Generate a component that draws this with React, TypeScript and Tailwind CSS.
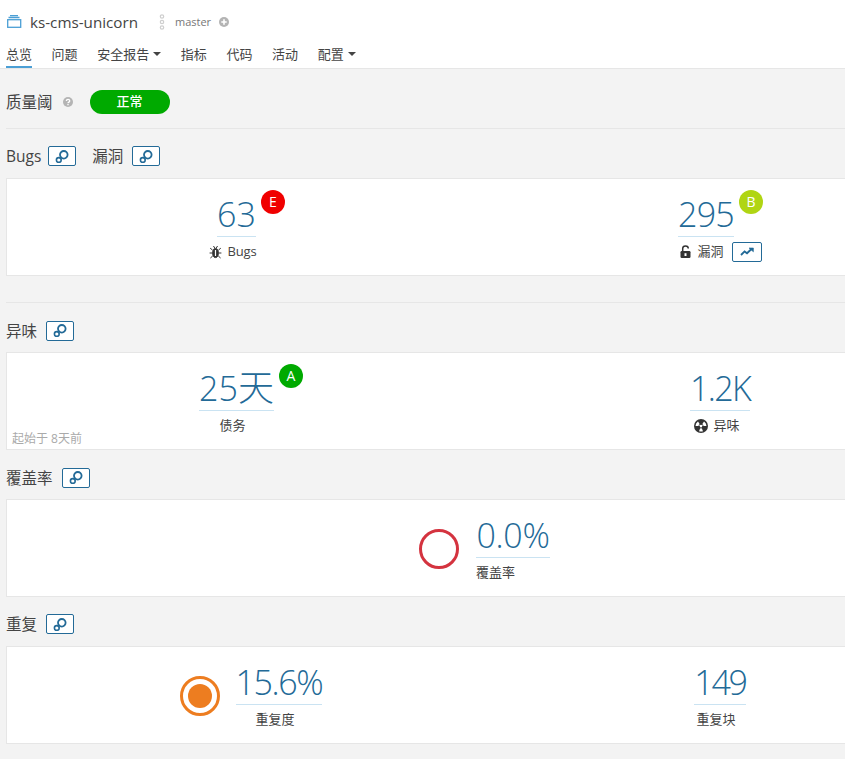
const font = "font-['Open_Sans','Noto_Sans_CJK_SC',sans-serif]";

function RepoIcon() {
  return (
    <svg width="15" height="13" viewBox="0 0 15 13" fill="none" stroke="#4b9fd5" strokeWidth="1.300">
      <rect x="0.700" y="4.700" width="13" height="7.600" />
      <path d="M1.500 2.500h11M3 0.700h8" />
    </svg>
  );
}

function BranchIcon() {
  return (
    <svg width="8" height="16" viewBox="0 0 8 16" fill="none" stroke="#cfcfcf" strokeWidth="1.2">
      <circle cx="4" cy="2.5" r="1.7" />
      <circle cx="4" cy="8" r="1.7" />
      <circle cx="4" cy="13.5" r="1.7" />
    </svg>
  );
}

function CircleGlyph({ glyph }: { glyph: string }) {
  return (
    <svg width="10" height="10" viewBox="0 0 10 10">
      <circle cx="5" cy="5" r="5" fill="#b4b4b4" />
      {glyph === "plus" ? (
        <path d="M5 2.3v5.4M2.3 5h5.4" stroke="#fff" strokeWidth="1.6" />
      ) : (
        <path d="M3.4 3.9c0-2.1 3.3-2.1 3.3 0 0 1.2-1.7 1.2-1.7 2.3M5 7v1.3" stroke="#fff" strokeWidth="1.3" fill="none" />
      )}
    </svg>
  );
}

function LinkButton() {
  return (
    <span className="flex h-[20px] w-[28px] items-center justify-center rounded-[2px] border border-[#236a97] bg-white">
      <svg width="14" height="13" viewBox="0 0 14 13" fill="none" stroke="#236a97">
        <circle cx="8.800" cy="4.800" r="3.800" strokeWidth="1.800" />
        <circle cx="3.800" cy="10" r="2.400" strokeWidth="1.600" />
      </svg>
    </span>
  );
}

function BugIcon() {
  return (
    <svg width="13" height="14" viewBox="0 0 13 14" fill="none" stroke="#333" strokeWidth="1">
      <ellipse cx="6.5" cy="8" rx="2.8" ry="4.6" fill="#333" />
      <path d="M4.5 1l1.2 2M8.5 1L7.3 3M3.5 5L1.2 3.2M9.5 5l2.3-1.8M3.5 8H.6M9.5 8h2.9M3.7 11l-2.3 2M9.3 11l2.3 2" />
      <path d="M6.5 5v6" stroke="#fff" strokeWidth="1.200" />
    </svg>
  );
}

function LockIcon() {
  return (
    <svg width="11" height="13" viewBox="0 0 11 13">
      <path d="M2.700 6V3.600C2.700 2 3.900 1 5.500 1s2.800 1 2.800 2.600" fill="none" stroke="#333" strokeWidth="1.500" />
      <rect x="0.500" y="6" width="10" height="7" rx="1.200" fill="#333" />
      <rect x="4.500" y="8.200" width="2" height="2.800" fill="#fff" />
    </svg>
  );
}

function TrendButton() {
  return (
    <span className="flex h-[20px] w-[30px] items-center justify-center rounded-[2px] border border-[#236a97] bg-white">
      <svg width="14" height="9" viewBox="0 0 14 9" fill="none" stroke="#236a97">
        <path d="M1 8l3.6-3.6 2.4 1.8L11.5 2" strokeWidth="1.9" />
        <path d="M9 1h4.4v3.8z" fill="#236a97" strokeWidth="0.6" />
      </svg>
    </span>
  );
}

function SmellIcon() {
  return (
    <svg width="14" height="14" viewBox="0 0 14 14">
      <circle cx="7" cy="7" r="7" fill="#333" />
      <circle cx="7" cy="7" r="1.300" fill="#fff" />
      <path d="M7 7L5 12.200A5.500 5.500 0 0 0 9 12.200z" fill="#fff" />
      <path d="M7 7L1.900 5A5.500 5.500 0 0 0 2.500 10.100z" fill="#fff" transform="rotate(35 7 7)" />
      <path d="M7 7L12.100 5A5.500 5.500 0 0 1 11.500 10.100z" fill="#fff" transform="rotate(-35 7 7)" />
      <circle cx="7" cy="7" r="2.100" fill="none" stroke="#333" strokeWidth="0.800" />
    </svg>
  );
}

function Badge({ rating, bg }: { rating: string; bg: string }) {
  return (
    <span
      className={`absolute left-full top-[-14px] ml-[5px] flex h-[24px] w-[24px] items-center justify-center rounded-full text-[14px] font-medium text-white ${bg}`}
    >
      {rating}
    </span>
  );
}

function Measure({
  value,
  label,
  badge,
  tracking = "",
}: {
  value: React.ReactNode;
  label: React.ReactNode;
  badge?: React.ReactNode;
  tracking?: string;
}) {
  return (
    <div className="flex flex-col items-center">
      <div className={`relative border-b border-[#cae3f2] pb-[3px] pt-[1px] text-[34px] font-light leading-[38px] text-[#236a97] ${tracking}`}>
        {value}
        {badge && <span className="absolute left-full top-[10px] tracking-normal">{badge}</span>}
      </div>
      <div className="mr-[8px] mt-[5px] flex h-[20px] items-center gap-[6px] text-[13px] text-[#444]">{label}</div>
    </div>
  );
}

function SectionTitle({ title }: { title: string }) {
  return <h3 className="text-[15.500px] leading-[20px] text-[#444]">{title}</h3>;
}

function Card({ children, first }: { children: React.ReactNode; first?: React.ReactNode }) {
  return (
    <div className="relative ml-[6px] h-[98px] w-[968px] border border-[#e6e6e6] bg-white pt-[1px]">
      {children}
      {first}
    </div>
  );
}

export default function App() {
  const nav = ["总览", "问题", "安全报告", "指标", "代码", "活动", "配置"];

  return (
    <div className={`${font} h-[759px] w-[845px] overflow-hidden bg-[#f3f3f3]`}>
      <header className="h-[69px] border-b border-[#e6e6e6] bg-white pl-[6px]">
        <div className="flex h-[44px] items-center">
          <span className="mb-[2px] ml-[1px]">
            <RepoIcon />
          </span>
          <span className="ml-[8px] text-[15.200px] text-[#444]">ks-cms-unicorn</span>
          <span className="ml-[20px]">
            <BranchIcon />
          </span>
          <span className="ml-[9px] text-[11px] text-[#777]">master</span>
          <span className="ml-[8px]">
            <CircleGlyph glyph="plus" />
          </span>
        </div>
        <nav className="flex h-[24px] items-start gap-[19.600px] text-[13px] leading-[20px] text-[#444]">
          {nav.map((item) => (
            <a key={item} className={`flex h-[24px] items-start ${item === "总览" ? "border-b-[2px] border-[#4b9fd5]" : ""}`}>
              {item}
              {(item === "安全报告" || item === "配置") && (
                <span className="ml-[4px] mt-[8px] border-x-[4px] border-t-[4px] border-x-transparent border-t-[#444]" />
              )}
            </a>
          ))}
        </nav>
      </header>

      <div className="ml-[6px] flex h-[60px] items-center border-b border-[#e6e6e6] pt-[6px]">
        <SectionTitle title="质量阈" />
        <span className="ml-[10px]">
          <CircleGlyph glyph="help" />
        </span>
        <span className="ml-[17px] flex h-[24px] w-[80px] items-center justify-center rounded-full bg-[#00aa00] text-[13px] font-medium text-white">
          正常
        </span>
      </div>

      <div className="ml-[6px] flex h-[49px] items-center pt-[5px]">
        <SectionTitle title="Bugs" />
        <span className="ml-[7px]">
          <LinkButton />
        </span>
        <span className="ml-[16px]">
          <SectionTitle title="漏洞" />
        </span>
        <span className="ml-[9px]">
          <LinkButton />
        </span>
      </div>
      <Card>
        <div className="grid h-full grid-cols-[459px_508px] items-center justify-items-center">
          <Measure
            value="63"
            badge={<Badge rating="E" bg="bg-[#f00000]" />}
            label={
              <>
                <BugIcon />
                <span className="tracking-[-0.200px]">Bugs</span>
              </>
            }
          />
          <div className="mr-[28px]">
            <Measure
              value="295"
              tracking="tracking-[-0.700px]"
              badge={<Badge rating="B" bg="bg-[#b0d513]" />}
              label={
                <span className="ml-[10px] flex w-[55px] items-center gap-[7px] self-start whitespace-nowrap tracking-normal">
                  <span className="shrink-0">
                    <LockIcon />
                  </span>
                  漏洞
                  <span className="ml-[1px] shrink-0">
                    <TrendButton />
                  </span>
                </span>
              }
            />
          </div>
        </div>
      </Card>

      <div className="ml-[6px] mt-[26px] flex h-[50px] items-center border-t border-[#e6e6e6] pt-[6px]">
        <SectionTitle title="异味" />
        <span className="ml-[9px]">
          <LinkButton />
        </span>
      </div>
      <Card first={<span className="absolute bottom-[1px] left-[5px] text-[12px] text-[#aaa]">起始于 8天前</span>}>
        <div className="grid h-full grid-cols-[459px_508px] items-center justify-items-center">
          <Measure
            value={
              <>
                25<span className="text-[36px]">天</span>
              </>
            }
            badge={<Badge rating="A" bg="bg-[#00aa00]" />}
            label={<span>债务</span>}
          />
          <Measure
            value="1.2K"
            tracking="tracking-[-1.700px]"
            label={
              <span className="ml-[2px] flex items-center gap-[5px] tracking-normal">
                <SmellIcon />
                异味
              </span>
            }
          />
        </div>
      </Card>

      <div className="ml-[6px] flex h-[49px] items-center pt-[6px]">
        <SectionTitle title="覆盖率" />
        <span className="ml-[9px]">
          <LinkButton />
        </span>
      </div>
      <Card>
        <div className="flex h-full items-center pl-[412px]">
          <span className="h-[40px] w-[40px] rounded-full border-[3px] border-[#d4333f]" />
          <div className="ml-[17px]">
            <Measure value="0.0%" tracking="tracking-[-0.300px]" label={<span className="mr-[27px] tracking-normal">覆盖率</span>} />
          </div>
        </div>
      </Card>

      <div className="ml-[6px] flex h-[49px] items-center pt-[5px]">
        <SectionTitle title="重复" />
        <span className="ml-[9px]">
          <LinkButton />
        </span>
      </div>
      <Card>
        <div className="grid h-full grid-cols-[459px_508px] items-center justify-items-center">
          <div className="ml-[29px] flex items-center">
            <span className="flex h-[40px] w-[40px] items-center justify-center rounded-full border-[3px] border-[#ed7d20]">
              <span className="h-[24px] w-[24px] rounded-full bg-[#ed7d20]" />
            </span>
            <div className="ml-[16px]">
              <Measure value="15.6%" tracking="tracking-[-1.400px]" label={<span className="tracking-normal">重复度</span>} />
            </div>
          </div>
          <Measure value="149" tracking="tracking-[-2.300px]" label={<span className="tracking-normal">重复块</span>} />
        </div>
      </Card>
    </div>
  );
}
